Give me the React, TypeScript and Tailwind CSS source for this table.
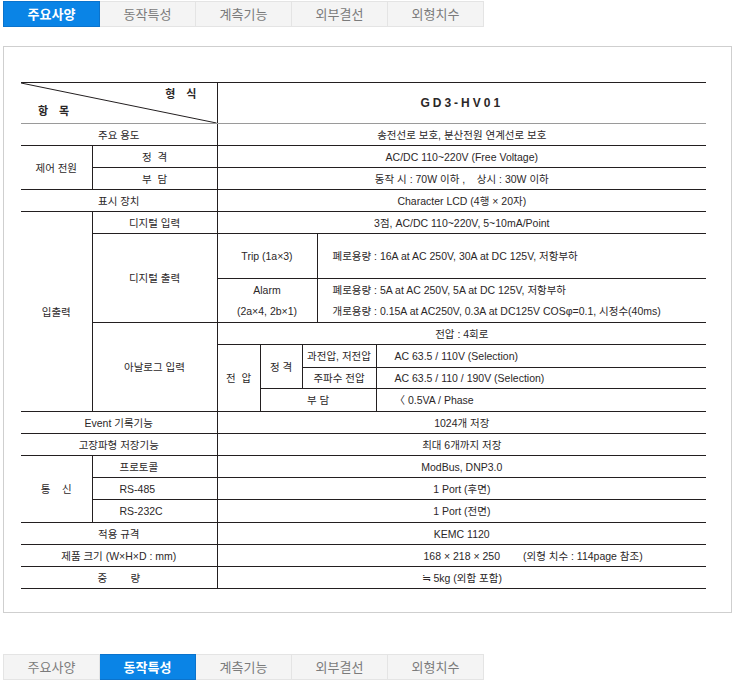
const TABS = ['주요사양', '동작특성', '계측기능', '외부결선', '외형치수'];

const cell = 'border border-[#231f20] p-0 text-center align-middle';
const first = 'border-l-0';
const last = 'border-r-0';

function Tabs({ active }: { active: number }) {
  return (
    <div className="flex w-[481px] font-['Noto_Sans_CJK_KR',sans-serif] text-[13px]">
      {TABS.map((t, i) => (
        <div
          key={t}
          className={
            'flex h-[26px] flex-1 items-center justify-center border-y border-r ' +
            (i === 0 ? 'border-l ' : '') +
            (i === active
              ? 'border-[#0b73cc] bg-[#0a84e6] font-bold text-white'
              : 'border-[#e4e4e4] bg-[#f4f4f4] text-[#7b7b7b]')
          }
        >
          {t}
        </div>
      ))}
    </div>
  );
}

function SpecTable() {
  return (
    <table className="w-[685px] table-fixed border-collapse font-['Liberation_Sans','Noto_Sans_CJK_KR',sans-serif] text-[10.5px] leading-[18px] text-[#2b2728]">
      <colgroup>
        <col className="w-[71px]" />
        <col className="w-[125px]" />
        <col className="w-[43px]" />
        <col className="w-[42px]" />
        <col className="w-[15px]" />
        <col className="w-[59px]" />
        <col className="w-[330px]" />
      </colgroup>
      <tbody>
        <tr className="h-[41px]">
          <td colSpan={2} className={`${cell} ${first} relative border-b-[#9a9a9a]`}>
            <svg className="absolute inset-0 h-full w-full" preserveAspectRatio="none" viewBox="0 0 100 100">
              <line x1="0" y1="0" x2="100" y2="100" stroke="#231f20" strokeWidth="1" vectorEffect="non-scaling-stroke" />
            </svg>
            <div className="relative flex h-[39px] flex-col justify-between text-[11px] font-bold leading-none">
              <span className="mt-[5px] self-end pr-[9px] tracking-[11px]">형식</span>
              <span className="mb-[6px] self-start pl-[17px] tracking-[11px]">항목</span>
            </div>
          </td>
          <td colSpan={5} className={`${cell} ${last} border-b-[#9a9a9a] text-[12px] font-bold tracking-[3px]`}>
            GD3-HV01
          </td>
        </tr>
        <tr className="h-[22px]">
          <td colSpan={2} className={`${cell} ${first}`}>주요 용도</td>
          <td colSpan={5} className={`${cell} ${last}`}>송전선로 보호, 분산전원 연계선로 보호</td>
        </tr>
        <tr className="h-[22px]">
          <td rowSpan={2} className={`${cell} ${first}`}>제어 전원</td>
          <td className={cell}>정&nbsp;&nbsp;격</td>
          <td colSpan={5} className={`${cell} ${last}`}>AC/DC 110~220V (Free Voltage)</td>
        </tr>
        <tr className="h-[22px]">
          <td className={cell}>부&nbsp;&nbsp;담</td>
          <td colSpan={5} className={`${cell} ${last}`}>동작 시 : 70W 이하 ,&nbsp;&nbsp;&nbsp;&nbsp;상시 : 30W 이하</td>
        </tr>
        <tr className="h-[22px]">
          <td colSpan={2} className={`${cell} ${first}`}>표시 장치</td>
          <td colSpan={5} className={`${cell} ${last}`}>Character LCD (4행 × 20자)</td>
        </tr>
        <tr className="h-[22px]">
          <td rowSpan={7} className={`${cell} ${first}`}>입출력</td>
          <td className={cell}>디지털 입력</td>
          <td colSpan={5} className={`${cell} ${last}`}>3점, AC/DC 110~220V, 5~10mA/Point</td>
        </tr>
        <tr className="h-[45px]">
          <td rowSpan={2} className={cell}>디지털 출력</td>
          <td colSpan={3} className={cell}>Trip (1a×3)</td>
          <td colSpan={2} className={`${cell} ${last} pl-[15px] text-left`}>
            폐로용량 : 16A at AC 250V, 30A at DC 125V, 저항부하
          </td>
        </tr>
        <tr className="h-[44px]">
          <td colSpan={3} className={`${cell} leading-[21px]`}>
            <div>Alarm</div>
            <div>(2a×4, 2b×1)</div>
          </td>
          <td colSpan={2} className={`${cell} ${last} pl-[15px] text-left leading-[21px]`}>
            <div>폐로용량 : 5A at AC 250V, 5A at DC 125V, 저항부하</div>
            <div>개로용량 : 0.15A at AC250V, 0.3A at DC125V COSφ=0.1, 시정수(40ms)</div>
          </td>
        </tr>
        <tr className="h-[22px]">
          <td rowSpan={4} className={cell}>아날로그 입력</td>
          <td colSpan={5} className={`${cell} ${last}`}>전압 : 4회로</td>
        </tr>
        <tr className="h-[23px]">
          <td rowSpan={3} className={cell}>전&nbsp;&nbsp;압</td>
          <td rowSpan={2} className={cell}>정&nbsp;격</td>
          <td colSpan={2} className={cell}>과전압, 저전압</td>
          <td className={`${cell} ${last} pl-[18px] text-left`}>AC 63.5 / 110V (Selection)</td>
        </tr>
        <tr className="h-[21px]">
          <td colSpan={2} className={cell}>주파수 전압</td>
          <td className={`${cell} ${last} pl-[18px] text-left`}>AC 63.5 / 110 / 190V (Selection)</td>
        </tr>
        <tr className="h-[23px]">
          <td colSpan={3} className={cell}>부&nbsp;담</td>
          <td className={`${cell} ${last} pl-[18px] text-left`}>〈 0.5VA / Phase</td>
        </tr>
        <tr className="h-[22px]">
          <td colSpan={2} className={`${cell} ${first}`}>Event 기록기능</td>
          <td colSpan={5} className={`${cell} ${last}`}>1024개 저장</td>
        </tr>
        <tr className="h-[22px]">
          <td colSpan={2} className={`${cell} ${first}`}>고장파형 저장기능</td>
          <td colSpan={5} className={`${cell} ${last}`}>최대 6개까지 저장</td>
        </tr>
        <tr className="h-[22px]">
          <td rowSpan={3} className={`${cell} ${first}`}>통&nbsp;&nbsp;&nbsp;&nbsp;신</td>
          <td className={`${cell} pl-[27px] text-left`}>프로토콜</td>
          <td colSpan={5} className={`${cell} ${last}`}>ModBus, DNP3.0</td>
        </tr>
        <tr className="h-[22px]">
          <td className={`${cell} pl-[27px] text-left`}>RS-485</td>
          <td colSpan={5} className={`${cell} ${last}`}>1 Port (후면)</td>
        </tr>
        <tr className="h-[23px]">
          <td className={`${cell} pl-[27px] text-left`}>RS-232C</td>
          <td colSpan={5} className={`${cell} ${last}`}>1 Port (전면)</td>
        </tr>
        <tr className="h-[22px]">
          <td colSpan={2} className={`${cell} ${first}`}>적용 규격</td>
          <td colSpan={5} className={`${cell} ${last}`}>KEMC 1120</td>
        </tr>
        <tr className="h-[22px]">
          <td colSpan={2} className={`${cell} ${first}`}>제품 크기 (W×H×D : mm)</td>
          <td colSpan={5} className={`${cell} ${last}`}>
            <div className="grid grid-cols-[1fr_auto_1fr]">
              <span />
              <span>168 × 218 × 250</span>
              <span className="pl-[23px] text-left">(외형 치수 : 114page 참조)</span>
            </div>
          </td>
        </tr>
        <tr className="h-[22px]">
          <td colSpan={2} className={`${cell} ${first}`}>중&nbsp;&nbsp;&nbsp;&nbsp;&nbsp;&nbsp;&nbsp;&nbsp;량</td>
          <td colSpan={5} className={`${cell} ${last}`}>≒ 5kg (외함 포함)</td>
        </tr>
      </tbody>
    </table>
  );
}

export default function App() {
  return (
    <div className="bg-white pl-[3px] pt-px">
      <Tabs active={0} />
      <div className="mt-[19px] w-[729px] border border-[#cfcfcf] pb-[23px] pl-[17px] pt-[35px]">
        <SpecTable />
      </div>
      <div className="mt-[41px]">
        <Tabs active={1} />
      </div>
    </div>
  );
}
